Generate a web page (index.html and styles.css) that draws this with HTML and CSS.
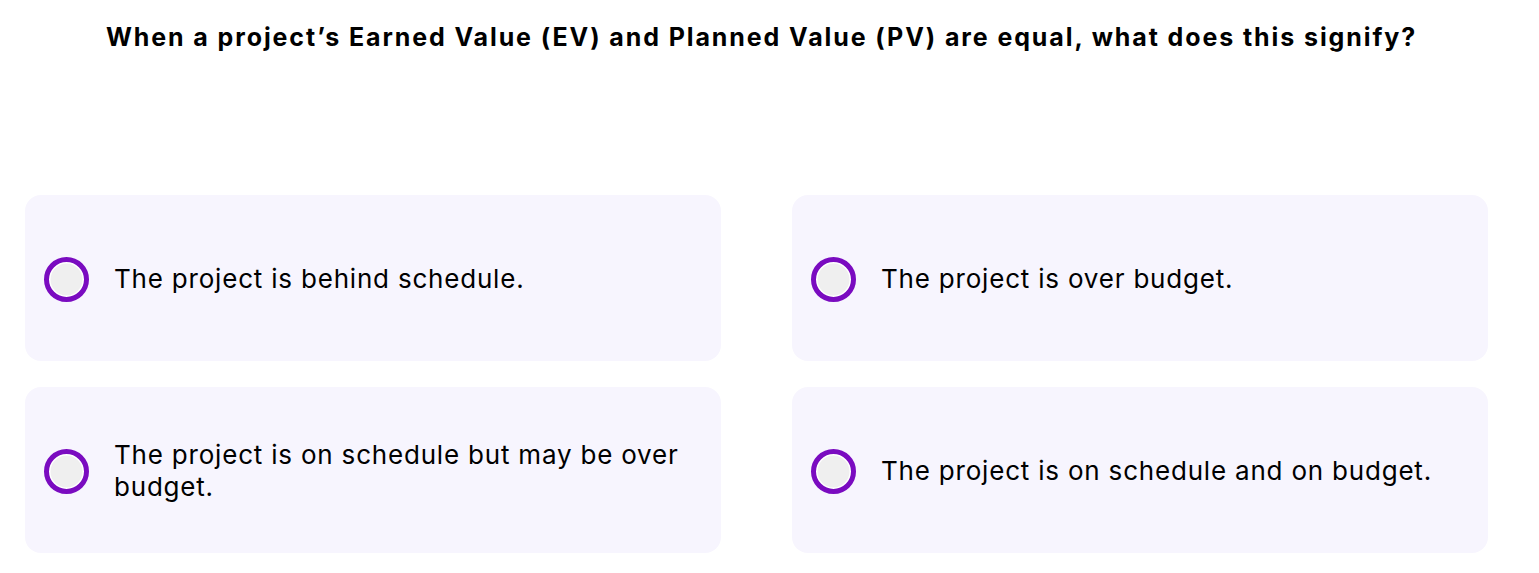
FILE: index.html
```html
<!DOCTYPE html>
<html>
<head>
<meta charset="utf-8">
<link rel="stylesheet" href="styles.css">
</head>
<body>
<div class="page">
  <h1 class="question">When a project’s Earned Value (EV) and Planned Value (PV) are equal, what does this signify?</h1>
  <div class="options">
    <label class="option"><span class="radio"></span><span class="text">The project is behind schedule.</span></label>
    <label class="option"><span class="radio"></span><span class="text">The project is over budget.</span></label>
    <label class="option"><span class="radio"></span><span class="text">The project is on schedule but may be over budget.</span></label>
    <label class="option"><span class="radio"></span><span class="text">The project is on schedule and on budget.</span></label>
  </div>
</div>
</body>
</html>
```
FILE: styles.css
```css
* { box-sizing: border-box; }
html, body { margin: 0; padding: 0; background: #fff; }
body { font-family: Inter, "Noto Sans", sans-serif; color: #000; }
.page { padding: 0 51px 0 25px; }
.question {
  margin: 20px 0 0;
  text-align: center;
  font-size: 25px;
  font-weight: 700;
  line-height: 34px;
  letter-spacing: 1.9px;
  padding-left: 10px;
}
.options {
  margin-top: 141px;
  display: grid;
  grid-template-columns: 1fr 1fr;
  column-gap: 71px;
  row-gap: 26px;
}
.option {
  display: flex;
  align-items: center;
  height: 166px;
  background: #f7f5fe;
  border-radius: 16px;
  padding: 2px 19px 0;
}
.radio {
  flex: none;
  width: 45px;
  height: 45px;
  border-radius: 50%;
  border: 5px solid #7a0bc0;
  background: #efefef;
  box-shadow: inset 0 0 0 1.5px #fff;
  margin-right: 25px;
}
.text {
  font-size: 26px;
  line-height: 32px;
  letter-spacing: 0.8px;
}
```
